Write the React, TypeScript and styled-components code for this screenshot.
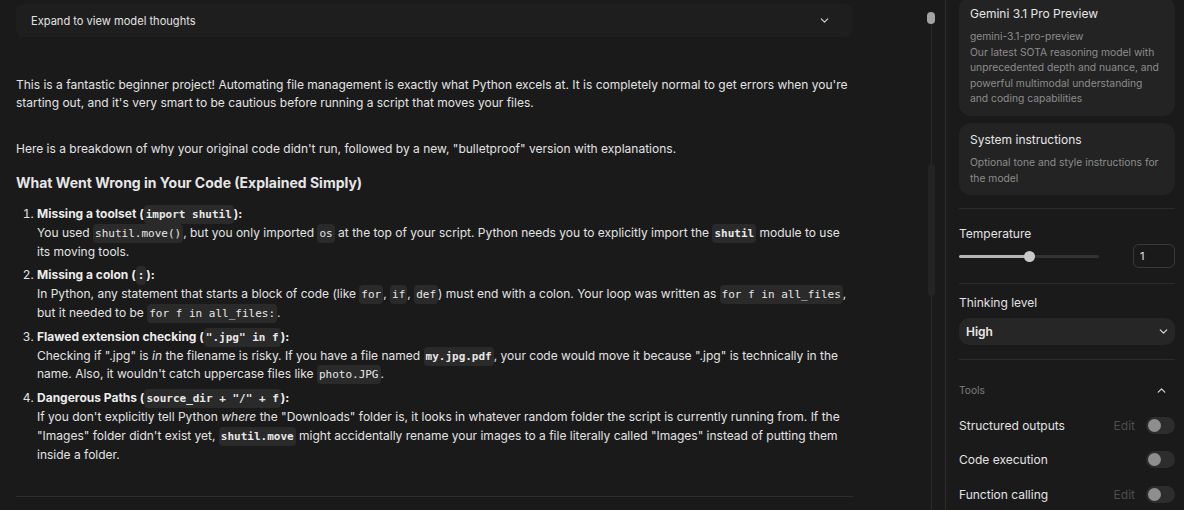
import React from 'react';
import styled, { createGlobalStyle } from 'styled-components';
import { ChevronDown, ChevronUp } from 'lucide-react';

const GlobalStyle = createGlobalStyle`
  body {
    margin: 0;
    background: #1a1a1a;
    font-family: Inter, 'Noto Sans', sans-serif;
    color: #e3e3e3;
    -webkit-font-smoothing: antialiased;
  }
`;

const Page = styled.div`
  display: flex;
  height: 510px;
  overflow: hidden;
  background: #1a1a1a;
`;

const Main = styled.div`
  width: 945px;
  flex-shrink: 0;
  display: flex;
  border-right: 1px solid #2a2a2a;
`;

const Content = styled.div`
  width: 837px;
  margin-left: 16px;
  padding-top: 4px;
  display: flex;
  flex-direction: column;
`;

const ThoughtsBox = styled.div`
  height: 33px;
  display: flex;
  align-items: center;
  justify-content: space-between;
  padding: 0 22px 0 15px;
  background: #1e1e1e;
  border-radius: 8px;
  font-size: 11.1px;
  color: #e3e3e3;
`;

const Paragraph = styled.p<{ gap: number }>`
  margin: ${({ gap }) => gap}px 0 0;
  font-size: 12px;
  line-height: 18px;
`;

const Heading = styled.h3`
  margin: 15px 0 0;
  font-size: 14px;
  line-height: 20px;
  font-weight: 700;
  color: #e6e6e6;
`;

const List = styled.ol`
  margin: 12px 0 0;
  padding-left: 21px;
  font-size: 12px;
  line-height: 18.8px;
`;

const Item = styled.li`
  margin-bottom: 5px;
  &::marker {
    color: #e3e3e3;
  }
`;

const ItemTitle = styled.div`
  font-weight: 700;
  color: #ececec;
`;

const Code = styled.code<{ bold?: boolean }>`
  font-family: 'DejaVu Sans Mono', 'Liberation Mono', monospace;
  font-size: 11px;
  line-height: 1;
  font-weight: ${({ bold }) => (bold ? 700 : 400)};
  white-space: nowrap;
  background: #2a2a2a;
  border-radius: 4px;
  padding: 3px 2px;
  color: #e8e8e8;
`;

const BottomRule = styled.div`
  margin-top: auto;
  margin-bottom: 13px;
  height: 1px;
  background: #2e2e2e;
`;

const Rail = styled.div`
  margin-left: auto;
  margin-right: 10px;
  width: 8px;
  display: flex;
  flex-direction: column;
  align-items: center;
`;

const Thumb = styled.div`
  margin-top: 12px;
  width: 8px;
  height: 12px;
  border-radius: 4px;
  background: #a3a3a3;
`;

const Track = styled.div<{ h?: number }>`
  width: 1px;
  background: #2a2a2a;
  ${({ h }) => (h ? `height: ${h}px;` : 'flex: 1;')}
`;

const Marker = styled.div`
  width: 7px;
  height: 132px;
  border-radius: 4px;
  background: #242424;
`;

const Side = styled.aside`
  flex: 1;
  padding: 0 9px 0 13px;
  display: flex;
  flex-direction: column;
  & > * {
    flex-shrink: 0;
  }
`;

const Card = styled.div<{ top?: number }>`
  margin-top: ${({ top }) => top ?? 0}px;
  background: #232323;
  border-radius: 12px;
  padding: 8px 13.5px 9px 11px;
`;

const CardTitle = styled.div`
  font-size: 12px;
  line-height: 18px;
  color: #e6e6e6;
`;

const CardText = styled.div`
  margin-top: 6px;
  font-size: 10.3px;
  line-height: 15.6px;
  color: #8c8c8c;
`;

const Rule = styled.div<{ top: number }>`
  margin-top: ${({ top }) => top}px;
  height: 1px;
  background: #2b2b2b;
`;

const Label = styled.div<{ top: number }>`
  margin-top: ${({ top }) => top}px;
  font-size: 12px;
  line-height: 18px;
  color: #e3e3e3;
`;

const SliderRow = styled.div`
  margin-top: 1px;
  height: 24px;
  display: flex;
  align-items: center;
  justify-content: space-between;
`;

const Slider = styled.div`
  position: relative;
  width: 140px;
  height: 3px;
  border-radius: 2px;
  background: #333333;
`;

const SliderFill = styled.div`
  height: 100%;
  border-radius: 2px;
  background: #b5b5b5;
`;

const SliderKnob = styled.div`
  position: absolute;
  top: -4px;
  width: 11px;
  height: 11px;
  margin-left: -5.5px;
  border-radius: 50%;
  background: #c9c9c9;
`;

const NumberBox = styled.div`
  box-sizing: border-box;
  width: 42px;
  height: 24px;
  border: 1px solid #3a3a3a;
  border-radius: 6px;
  padding-left: 6px;
  display: flex;
  align-items: center;
  font-size: 11px;
  color: #e3e3e3;
`;

const Select = styled.div`
  margin-top: 6px;
  height: 27px;
  border-radius: 10px;
  background: #262626;
  display: flex;
  align-items: center;
  justify-content: space-between;
  padding: 0 5px 0 7px;
  font-size: 12px;
  font-weight: 600;
  color: #e8e8e8;
`;

const SectionHeader = styled.div`
  margin-top: 18px;
  height: 24px;
  display: flex;
  align-items: center;
  justify-content: space-between;
  padding-right: 7px;
  font-size: 10.2px;
  color: #7d7d7d;
`;

const ToolList = styled.div`
  margin-top: 6px;
  display: flex;
  flex-direction: column;
`;

const ToolRow = styled.div`
  height: 34.5px;
  flex-shrink: 0;
  display: flex;
  align-items: center;
  font-size: 12px;
  color: #e3e3e3;
`;

const ToolName = styled.span`
  flex: 1;
`;

const EditLink = styled.span`
  font-size: 12px;
  color: #4d4d4d;
  margin-right: 11px;
`;

const Toggle = styled.div`
  width: 29px;
  height: 17px;
  border-radius: 9px;
  background: #2d2d2d;
  display: flex;
  align-items: center;
  padding-left: 2px;
  box-sizing: border-box;
`;

const ToggleKnob = styled.div`
  width: 13px;
  height: 13px;
  border-radius: 50%;
  background: #8e8e8e;
`;

const tools = [
  { name: 'Structured outputs', edit: true },
  { name: 'Code execution', edit: false },
  { name: 'Function calling', edit: true },
];

const App = () => {
  const temperature = 0.5;

  return (
    <Page>
      <GlobalStyle />
      <Main>
        <Content>
          <ThoughtsBox>
            <span>Expand to view model thoughts</span>
            <ChevronDown size={13} strokeWidth={2.2} color="#d0d0d0" />
          </ThoughtsBox>
          <Paragraph gap={39}>
            This is a fantastic beginner project! Automating file management is exactly what Python excels at. It is
            completely normal to get errors when you're starting out, and it's very smart to be cautious before running a
            script that moves your files.
          </Paragraph>
          <Paragraph gap={28}>
            Here is a breakdown of why your original code didn't run, followed by a new, "bulletproof" version with
            explanations.
          </Paragraph>
          <Heading>What Went Wrong in Your Code (Explained Simply)</Heading>
          <List>
            <Item>
              <ItemTitle>
                Missing a toolset (<Code bold>import shutil</Code>):
              </ItemTitle>
              <div>
                You used <Code>shutil.move()</Code>, but you only imported <Code>os</Code> at the top of your script.
                Python needs you to explicitly import the <Code bold>shutil</Code> module to use its moving tools.
              </div>
            </Item>
            <Item>
              <ItemTitle>
                Missing a colon (<Code bold>:</Code>):
              </ItemTitle>
              <div>
                In Python, any statement that starts a block of code (like <Code>for</Code>, <Code>if</Code>,{' '}
                <Code>def</Code>) must end with a colon. Your loop was written as <Code>for f in all_files</Code>, but it
                needed to be <Code>for f in all_files:</Code>.
              </div>
            </Item>
            <Item>
              <ItemTitle>
                Flawed extension checking (<Code bold>".jpg" in f</Code>):
              </ItemTitle>
              <div>
                Checking if ".jpg" is <em>in</em> the filename is risky. If you have a file named{' '}
                <Code bold>my.jpg.pdf</Code>, your code would move it because ".jpg" is technically in the name. Also, it
                wouldn't catch uppercase files like <Code>photo.JPG</Code>.
              </div>
            </Item>
            <Item>
              <ItemTitle>
                Dangerous Paths (<Code bold>source_dir + "/" + f</Code>):
              </ItemTitle>
              <div>
                If you don't explicitly tell Python <em>where</em> the "Downloads" folder is, it looks in whatever random
                folder the script is currently running from. If the "Images" folder didn't exist yet,{' '}
                <Code bold>shutil.move</Code> might accidentally rename your images to a file literally called "Images"
                instead of putting them inside a folder.
              </div>
            </Item>
          </List>
          <BottomRule />
        </Content>
        <Rail>
          <Thumb />
          <Track h={140} />
          <Marker />
          <Track />
        </Rail>
      </Main>

      <Side>
        <Card top={-3}>
          <CardTitle>Gemini 3.1 Pro Preview</CardTitle>
          <CardText>
            gemini-3.1-pro-preview
            <br />
            Our latest SOTA reasoning model with unprecedented depth and nuance, and powerful multimodal understanding
            and coding capabilities
          </CardText>
        </Card>
        <Card top={7}>
          <CardTitle>System instructions</CardTitle>
          <CardText>Optional tone and style instructions for the model</CardText>
        </Card>

        <Rule top={13} />
        <Label top={16}>Temperature</Label>
        <SliderRow>
          <Slider>
            <SliderFill style={{ width: `${temperature * 100}%` }} />
            <SliderKnob style={{ left: `${temperature * 100}%` }} />
          </Slider>
          <NumberBox>1</NumberBox>
        </SliderRow>

        <Rule top={15} />
        <Label top={10}>Thinking level</Label>
        <Select>
          <span>High</span>
          <ChevronDown size={13} strokeWidth={2.2} color="#d8d8d8" />
        </Select>

        <Rule top={14} />
        <SectionHeader>
          <span>Tools</span>
          <ChevronUp size={13} strokeWidth={2.2} color="#d8d8d8" />
        </SectionHeader>
        <ToolList>
          {tools.map((t) => (
            <ToolRow key={t.name}>
              <ToolName>{t.name}</ToolName>
              {t.edit && <EditLink>Edit</EditLink>}
              <Toggle>
                <ToggleKnob />
              </Toggle>
            </ToolRow>
          ))}
        </ToolList>
      </Side>
    </Page>
  );
};

export default App;
